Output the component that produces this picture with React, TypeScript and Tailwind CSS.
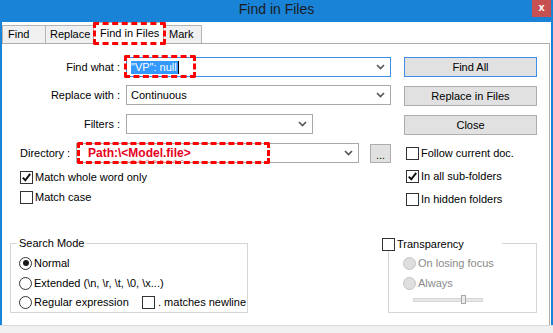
import React from "react";

const Check = ({ checked = false }: { checked?: boolean }) => (
  <span className="w-[13px] h-[13px] shrink-0 border border-[#333] bg-white flex items-center justify-center">
    {checked && (
      <svg width="11" height="11" viewBox="0 0 11 11">
        <path d="M1.8 5.6 L4.3 8.3 L9.2 1.8" fill="none" stroke="#111" strokeWidth="2" />
      </svg>
    )}
  </span>
);

const Radio = ({ checked = false, disabled = false }: { checked?: boolean; disabled?: boolean }) =>
  disabled ? (
    <span className="w-[13px] h-[13px] shrink-0 rounded-full border border-[#c4c4c4] bg-[#dedede]" />
  ) : (
    <span className="w-[13px] h-[13px] shrink-0 rounded-full border border-[#333] bg-white flex items-center justify-center">
      {checked && <span className="w-[6px] h-[6px] rounded-full bg-[#1a1a1a]" />}
    </span>
  );

const Arrow = () => (
  <svg width="9" height="6" viewBox="0 0 9 6" className="shrink-0">
    <path d="M1 1 L4.5 4.5 L8 1" fill="none" stroke="#555" strokeWidth="1.6" />
  </svg>
);

const Combo = ({ className, focus = false, children }: any) => (
  <div
    className={`relative h-[20px] bg-white border flex items-center pl-[4px] pr-[5px] ${
      focus ? "border-[#3d8ee8]" : "border-[#a9a9a9]"
    } ${className}`}
  >
    <div className="flex-1 flex items-center whitespace-nowrap">{children}</div>
    <Arrow />
  </div>
);

const Btn = ({ label, focus = false }: { label: string; focus?: boolean }) => (
  <div
    className={`h-[20px] bg-[#e1e1e1] border flex items-center justify-center ${
      focus ? "border-[#3d8ee8]" : "border-[#adadad]"
    }`}
  >
    {label}
  </div>
);

const CheckRow = ({ label, checked = false, className = "" }: any) => (
  <div className={`flex items-center gap-[2px] h-[13px] whitespace-nowrap ${className}`}>
    <Check checked={checked} />
    <span>{label}</span>
  </div>
);

export default function App() {
  return (
    <div className="w-[553px] h-[333px] bg-[#1883d7] flex flex-col overflow-hidden font-['Liberation_Sans',Arial,sans-serif] text-[11px] text-black">
      {/* title bar */}
      <div className="h-[22px] shrink-0 grid grid-cols-[1fr_auto_1fr]">
        <div />
        <div className="text-[14px] leading-[19px] text-[#1c1c1c]">Find in Files</div>
        <div className="flex justify-end pr-[2px]">
          <div className="w-[19px] h-[17px] bg-[#c75050] text-white font-bold text-[11px] leading-[15px] text-center">
            x
          </div>
        </div>
      </div>

      <div className="flex-1 mx-[2px] bg-white flex flex-col">
        {/* tabs */}
        <div className="h-[21px] flex items-end shrink-0 whitespace-nowrap">
          <div className="w-[44px] h-[18px] bg-[#f0f0f0] border border-b-0 border-[#b4b4b4] pl-[5px] flex items-center">
            Find
          </div>
          <div className="-ml-px w-[49px] h-[18px] bg-[#f0f0f0] border border-b-0 border-[#b4b4b4] pl-[4px] flex items-center">
            Replace
          </div>
          <div className="relative z-10 -ml-px -mb-px w-[71px] h-[22px] bg-white border border-b-0 border-[#b4b4b4] pl-[6px] flex items-center">
            Find in Files
            <div className="absolute -left-px -top-[1px] -right-[3px] -bottom-px border-[3px] border-dashed border-[#f00] rounded-[2px]" />
          </div>
          <div className="-ml-px w-[39px] h-[18px] bg-[#f0f0f0] border border-b-0 border-[#b4b4b4] pl-[5px] flex items-center">
            Mark
          </div>
        </div>

        {/* panel */}
        <div className="flex-1 mr-[1px] border-t border-r border-[#adadad] flex flex-col">
          <div className="h-[162px] pt-[13px] flex">
            <div className="w-[390px] flex flex-col">
              <div className="h-[20px] flex items-center">
                <span className="w-[118px] text-right">Find what :</span>
                <Combo focus className="ml-[6px] w-[265px]">
                  <span className="bg-[#3399ff] text-white leading-[13px] pr-[1px]">"VP": null</span>
                  <span className="w-px h-[13px] bg-black" />
                  <div className="absolute -left-[3px] -top-[3px] w-[72px] h-[23px] border-[3px] border-dashed border-[#f00] rounded-[2px]" />
                </Combo>
              </div>
              <div className="h-[20px] mt-[8px] flex items-center">
                <span className="w-[118px] text-right">Replace with :</span>
                <Combo className="ml-[6px] w-[265px]">Continuous</Combo>
              </div>
              <div className="h-[20px] mt-[9px] flex items-center">
                <span className="w-[118px] text-right">Filters :</span>
                <Combo className="ml-[6px] w-[187px]" />
              </div>
              <div className="h-[20px] mt-[9px] flex items-center">
                <span className="w-[74px] pl-[18px]">Directory :</span>
                <Combo className="w-[283px]">
                  <span className="ml-[7px] font-bold text-[#e8001c] text-[12px]">
                    Path:\&lt;
                    <span className="underline decoration-wavy decoration-[#f07a7a] decoration-1 underline-offset-2">
                      Model.file
                    </span>
                    &gt;
                  </span>
                  <div className="absolute left-0 -top-[2px] w-[193px] h-[22px] border-[3px] border-dashed border-[#f00] rounded-[2px]" />
                </Combo>
                <div className="ml-[11px] w-[21px] h-[19px] bg-[#e1e1e1] border border-[#adadad] flex items-end justify-center leading-[14px]">
                  ...
                </div>
              </div>
              <CheckRow className="mt-[8px] pl-[18px]" checked label="Match whole word only" />
              <CheckRow className="mt-[7px] pl-[18px]" label="Match case" />
            </div>

            <div className="ml-[12px] w-[133px] flex flex-col">
              <Btn focus label="Find All" />
              <div className="mt-[9px]">
                <Btn label="Replace in Files" />
              </div>
              <div className="mt-[9px]">
                <Btn label="Close" />
              </div>
              <CheckRow className="mt-[12px] pl-[2px]" label="Follow current doc." />
              <CheckRow className="mt-[10px] pl-[2px]" checked label="In all sub-folders" />
              <CheckRow className="mt-[10px] pl-[2px]" label="In hidden folders" />
            </div>
          </div>

          {/* group boxes */}
          <div className="mt-[37px] pl-[8px] pr-[12px] flex justify-between whitespace-nowrap">
            <div className="relative w-[238px] h-[70px] border border-[#d5d5d5] pl-[8px] pt-[9px] flex flex-col">
              <span className="absolute left-[6px] -top-[7px] px-[2px] bg-white leading-[13px]">Search Mode</span>
              <div className="h-[20px] flex items-center gap-[2px]">
                <Radio checked />
                <span>Normal</span>
              </div>
              <div className="h-[20px] flex items-center gap-[2px]">
                <Radio />
                <span>Extended (\n, \r, \t, \0, \x...)</span>
              </div>
              <div className="h-[19px] flex items-center">
                <div className="w-[123px] flex items-center gap-[2px]">
                  <Radio />
                  <span>Regular expression</span>
                </div>
                <div className="flex items-center gap-[3px]">
                  <Check />
                  <span>. matches newline</span>
                </div>
              </div>
            </div>

            <div className="relative w-[149px] h-[70px] border border-[#d5d5d5] pl-[14px] pt-[9px] flex flex-col text-[#8a8a8a]">
              <div className="absolute -left-[7px] -top-[6px] w-[120px] h-[13px] bg-white flex items-center gap-[2px] text-black">
                <Check />
                <span>Transparency</span>
              </div>
              <div className="h-[20px] flex items-center gap-[2px]">
                <Radio disabled />
                <span>On losing focus</span>
              </div>
              <div className="h-[20px] flex items-center gap-[2px]">
                <Radio disabled />
                <span>Always</span>
              </div>
              <div className="relative ml-[10px] mt-[5px] w-[70px] h-[4px] bg-[#e7e7e7] border border-[#d6d6d6]">
                <div className="absolute left-[47px] -top-[4px] w-[5px] h-[9px] bg-[#ececec] border border-[#a8a8a8]" />
              </div>
            </div>
          </div>
        </div>
      </div>

      <div className="h-[8px] shrink-0 bg-[#f0f0f0] border-t border-[#dadada]" />
    </div>
  );
}
